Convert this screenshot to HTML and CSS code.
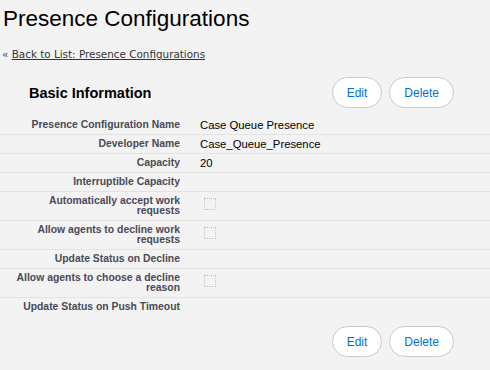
FILE: index.html
```html
<!DOCTYPE html>
<html lang="en">
<head>
    <meta charset="UTF-8">
    <title>Presence Configurations</title>
    <link rel="stylesheet" href="styles.css">
</head>
<body>
    <h1 class="page-title">Presence Configurations</h1>

    <div class="back-row">
        <span class="back-arrow">&laquo;</span>
        <a href="#" class="back-link">Back to List: Presence Configurations</a>
    </div>

    <div class="detail-block">
        <div class="block-header">
            <h2>Basic Information</h2>
            <div class="buttons">
                <button class="btn">Edit</button>
                <button class="btn">Delete</button>
            </div>
        </div>

        <table class="detail-list">
            <tr>
                <td class="label">Presence Configuration Name</td>
                <td class="value">Case Queue Presence</td>
            </tr>
            <tr>
                <td class="label">Developer Name</td>
                <td class="value">Case_Queue_Presence</td>
            </tr>
            <tr>
                <td class="label">Capacity</td>
                <td class="value">20</td>
            </tr>
            <tr>
                <td class="label">Interruptible Capacity</td>
                <td class="value"></td>
            </tr>
            <tr>
                <td class="label">Automatically accept work requests</td>
                <td class="value"><span class="checkbox"></span></td>
            </tr>
            <tr>
                <td class="label">Allow agents to decline work requests</td>
                <td class="value"><span class="checkbox"></span></td>
            </tr>
            <tr>
                <td class="label">Update Status on Decline</td>
                <td class="value"></td>
            </tr>
            <tr>
                <td class="label">Allow agents to choose a decline reason</td>
                <td class="value"><span class="checkbox"></span></td>
            </tr>
            <tr class="last">
                <td class="label">Update Status on Push Timeout</td>
                <td class="value"></td>
            </tr>
        </table>

        <div class="block-footer">
            <div class="buttons">
                <button class="btn">Edit</button>
                <button class="btn">Delete</button>
            </div>
        </div>
    </div>
</body>
</html>
```

FILE: styles.css
```css
* {
    box-sizing: border-box;
}

body {
    margin: 0;
    background: #f3f3f3;
    font-family: 'Liberation Sans', Arial, sans-serif;
    color: #000;
}

.page-title {
    margin: 6px 0 0 3px;
    font-size: 22.5px;
    font-weight: normal;
    line-height: 26px;
}

.back-row {
    margin: 15px 0 0 2px;
    font-family: 'DejaVu Sans', Verdana, sans-serif;
    font-size: 10.4px;
    line-height: 14px;
}

.back-arrow {
    color: #015ba7;
}

.back-link {
    color: #333;
}

.detail-block {
    margin-top: 16px;
}

.block-header {
    display: flex;
    align-items: center;
    justify-content: space-between;
    padding: 0 36px 0 29px;
    height: 31px;
    margin-bottom: 8px;
}

.block-header h2 {
    margin: 0;
    font-size: 14.5px;
    font-weight: bold;
}

.buttons {
    display: flex;
    gap: 7px;
}

.btn {
    height: 31px;
    padding: 0 14px;
    background: #fff;
    border: 1px solid #c9c9c9;
    border-radius: 16px;
    color: #0070d2;
    font-family: 'Liberation Sans', Arial, sans-serif;
    font-size: 12px;
    cursor: pointer;
}

.detail-list {
    width: 100%;
    border-collapse: collapse;
}

.detail-list td {
    padding: 4px 0;
    line-height: 10px;
    border-bottom: 1px solid #e3e3e3;
    vertical-align: top;
}

.detail-list tr.last td {
    border-bottom: none;
}

.label {
    width: 190px;
    padding-left: 10px !important;
    padding-right: 10px !important;
    text-align: right;
    font-size: 10.4px;
    font-weight: bold;
    color: #4a4a56;
}

.value {
    padding-left: 10px !important;
    font-size: 11.3px;
}

.checkbox {
    display: inline-block;
    width: 12px;
    height: 12px;
    margin: 2px 0 0 4px;
    border: 1px dotted #c4c4c4;
}

.block-footer {
    display: flex;
    justify-content: flex-end;
    padding: 10px 36px 0 0;
}
```
